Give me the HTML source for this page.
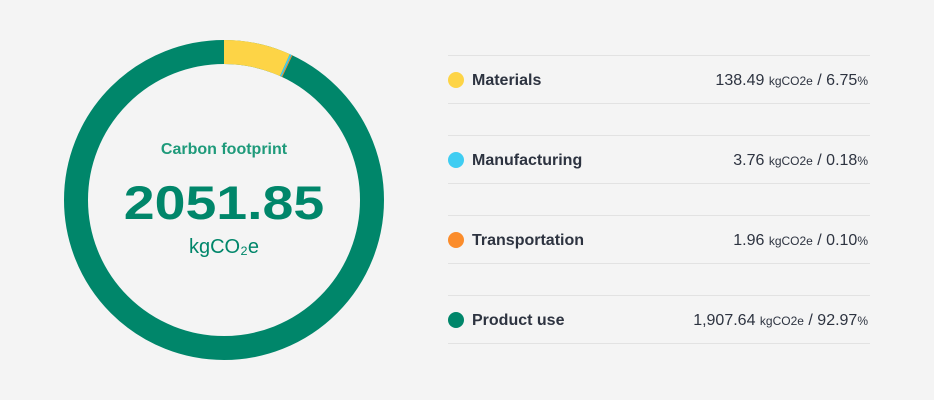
<!DOCTYPE html>
<html><head><meta charset="utf-8"><style>
body{margin:0;width:934px;height:400px;background:#f4f4f4;font-family:"Liberation Sans",sans-serif;position:relative;overflow:hidden}
.c{position:absolute;left:64px;width:320px;text-align:center;color:#00866a}
.line{position:absolute;left:448px;width:422px;height:1px;background:#e2e2e2}
.row{position:absolute;left:448px;width:420px;height:20px;color:#2d3340;font-size:16px}
.dot{position:absolute;left:0;top:2px;width:16px;height:16px;border-radius:50%}
.lbl{position:absolute;left:24px;top:2px;font-weight:bold}
.val{position:absolute;right:0;top:2px;white-space:nowrap}
.val small{font-size:12px}
</style></head><body>
<svg width="934" height="400" style="position:absolute;left:0;top:0">
<g transform="rotate(-90 224 200)" fill="none" stroke-width="24">
<circle cx="224" cy="200" r="148" stroke="#00866a"/>
<circle cx="224" cy="200" r="148" stroke="#fdd446" stroke-dasharray="62.8 1000"/>
<circle cx="224" cy="200" r="148" stroke="#3fcdf2" stroke-dasharray="0 62.8 1.7 1000"/>
<circle cx="224" cy="200" r="148" stroke="#fb8c2b" stroke-dasharray="0 64.5 0.9 1000"/>
</g></svg>
<div class="c" style="top:141px;font-size:16px;font-weight:bold;color:#1e9a7a">Carbon footprint</div>
<div class="c" style="top:175px;font-size:47px;font-weight:bold;transform:scaleX(1.18)">2051.85</div>
<div class="c" style="top:236px;font-size:20px">kgCO₂e</div>

<div class="line" style="top:55px"></div><div class="line" style="top:103px"></div>
<div class="line" style="top:135px"></div><div class="line" style="top:183px"></div>
<div class="line" style="top:215px"></div><div class="line" style="top:263px"></div>
<div class="line" style="top:295px"></div><div class="line" style="top:343px"></div>

<div class="row" style="top:70px"><div class="dot" style="background:#fdd446"></div><div class="lbl">Materials</div><div class="val">138.49 <small>kgCO2e</small> / 6.75<small>%</small></div></div>
<div class="row" style="top:150px"><div class="dot" style="background:#3fcdf2"></div><div class="lbl">Manufacturing</div><div class="val">3.76 <small>kgCO2e</small> / 0.18<small>%</small></div></div>
<div class="row" style="top:230px"><div class="dot" style="background:#fb8c2b"></div><div class="lbl">Transportation</div><div class="val">1.96 <small>kgCO2e</small> / 0.10<small>%</small></div></div>
<div class="row" style="top:310px"><div class="dot" style="background:#00866a"></div><div class="lbl">Product use</div><div class="val">1,907.64 <small>kgCO2e</small> / 92.97<small>%</small></div></div>
</body></html>
